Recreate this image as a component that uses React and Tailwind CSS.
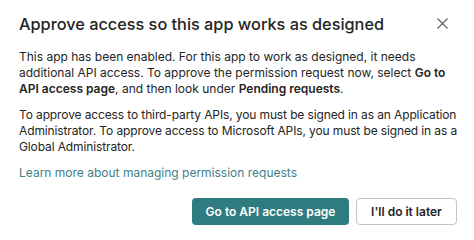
export default function App() {
  return (
    <div
      className="w-[474px] h-[240px] bg-white text-[#242424] overflow-hidden"
      style={{ fontFamily: "Inter, 'Liberation Sans', sans-serif" }}
    >
      <div className="pl-[19px] pr-[12px] pt-[11px]">
        <div className="flex items-start justify-between">
          <h1 className="whitespace-nowrap text-[16.3px] leading-[26px] font-medium text-[#242424]">
            Approve access so this app works as designed
          </h1>
          <button className="mt-[7px] mr-[14px] w-[11px] h-[11px] flex items-center justify-center text-[#5c5c5c]">
            <svg width="11" height="11" viewBox="0 0 11 11" fill="none" stroke="currentColor" strokeWidth="1.1">
              <path d="M0.5 0.5 L10.5 10.5 M10.5 0.5 L0.5 10.5" />
            </svg>
          </button>
        </div>
        <div className="mt-[12px] text-[12px] leading-[16px]">
          <p className="pr-[4px]">
            This app has been enabled. For this app to work as designed, it needs additional API access. To approve the permission request now, select{" "}
            <span className="font-semibold">Go to API access page</span>, and then look under{" "}
            <span className="font-semibold">Pending requests</span>.
          </p>
          <p className="mt-[10px] tracking-[-0.12px]">
            To approve access to third-party APIs, you must be signed in as an Application Administrator. To approve access to Microsoft APIs, you must be signed in as a Global Administrator.
          </p>
          <p className="mt-[10px] text-[#40828a]">Learn more about managing permission requests</p>
        </div>
        <div className="mt-[17px] flex justify-end gap-[7px] pr-[5px]">
          <button className="h-[27px] w-[157px] rounded-[4px] bg-[#2e7b80] text-white text-[12px] font-semibold">
            Go to API access page
          </button>
          <button className="h-[27px] w-[101px] rounded-[4px] border border-[#c4c4c4] bg-white text-[#242424] text-[12px] font-semibold">
            I'll do it later
          </button>
        </div>
      </div>
    </div>
  );
}
